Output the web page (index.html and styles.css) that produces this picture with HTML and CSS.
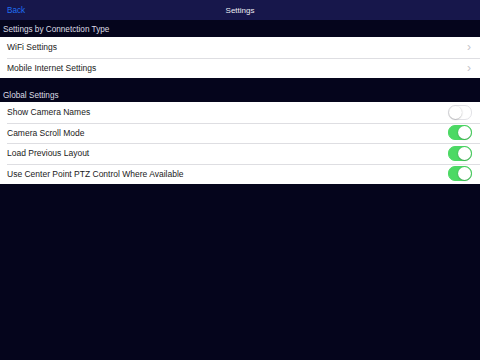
FILE: index.html
```html
<!DOCTYPE html>
<html>
	<head>
		<title>Settings</title>
		<link rel="stylesheet" href="styles.css">
	</head>
	<body>
		<div class="navbar">
			<span class="nav_back">Back</span>
			<span class="nav_title">Settings</span>
		</div>

		<div class="section_header">Settings by Connetction Type</div>
		<ul class="group">
			<li class="row">
				<span class="row_label">WiFi Settings</span>
				<span class="chevron">&rsaquo;</span>
			</li>
			<li class="row">
				<span class="row_label">Mobile Internet Settings</span>
				<span class="chevron">&rsaquo;</span>
			</li>
		</ul>

		<div class="section_header global">Global Settings</div>
		<ul class="group">
			<li class="row">
				<span class="row_label">Show Camera Names</span>
				<span class="switch"></span>
			</li>
			<li class="row">
				<span class="row_label">Camera Scroll Mode</span>
				<span class="switch on"></span>
			</li>
			<li class="row">
				<span class="row_label">Load Previous Layout</span>
				<span class="switch on"></span>
			</li>
			<li class="row">
				<span class="row_label">Use Center Point PTZ Control Where Available</span>
				<span class="switch on"></span>
			</li>
		</ul>
	</body>
</html>
```

FILE: styles.css
```css
body {
	margin : 0;
	background-color : #05051c;
	font-family : "Liberation Sans", Arial, sans-serif;
	font-size : 8.5px;
}

.navbar {
	position : relative;
	height : 20px;
	background-color : #17174b;
	display : flex;
	align-items : center;
	justify-content : center;
}
	.nav_back {
		position : absolute;
		left : 7px;
		top : 1px;
		line-height : 20px;
		color : #1f6ff2;
		font-size : 8.2px;
	}
	.nav_title {
		color : #ececf2;
		font-size : 8px;
	}

.section_header {
	height : 17px;
	line-height : 19px;
	padding-left : 3px;
	color : #dcdce4;
	font-size : 8.2px;
}
.section_header.global {
	margin-top : 8px;
	height : 16px;
	line-height : 19px;
}

ul.group {
	list-style : none;
	margin : 0;
	padding : 0;
	background-color : #fff;
}
	.row {
		display : flex;
		align-items : center;
		justify-content : space-between;
		height : 20.5px;
		padding : 0 7px;
		position : relative;
		color : #1a1a1a;
	}
	.row + .row::before {
		content : '';
		position : absolute;
		left : 7px;
		right : 0;
		top : 0;
		border-top : 1px solid #dedee2;
	}
	.chevron {
		color : #c4c4ca;
		font-size : 12px;
		margin-right : 2px;
	}

.switch {
	position : relative;
	width : 22px;
	height : 13px;
	border-radius : 7px;
	border : 1px solid #e2e2e6;
	background-color : #fff;
	margin-right : 1px;
}
.switch::after {
	content : '';
	position : absolute;
	top : 0;
	left : 0;
	width : 13px;
	height : 13px;
	border-radius : 50%;
	background-color : #fff;
	box-shadow : 0 0.5px 1.5px rgba(0,0,0,0.35);
}
.switch.on {
	background-color : #4cd964;
	border-color : #4cd964;
}
.switch.on::after {
	left : 9px;
}
```
